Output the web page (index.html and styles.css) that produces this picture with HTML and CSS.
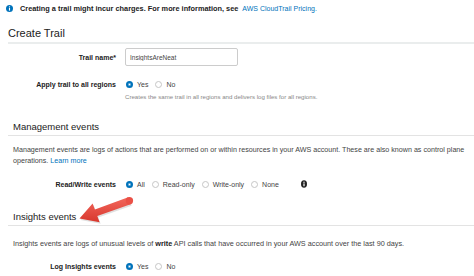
FILE: index.html
```html
<!DOCTYPE html>
<html lang="en">
<head>
  <meta charset="UTF-8">
  <title>Create Trail</title>
  <meta name="viewport" content="width=device-width, initial-scale=1">
  <link rel="stylesheet" href="styles.css">
</head>
<body>
  <div class="notice">
    <svg class="notice-icon" viewBox="0 0 10 10" width="7" height="7">
      <circle cx="5" cy="5" r="5" fill="#0073bb"/>
      <rect x="4.2" y="4.2" width="1.6" height="3.8" fill="#fff"/>
      <circle cx="5" cy="2.6" r="0.9" fill="#fff"/>
    </svg>
    <span class="notice-text">Creating a trail might incur charges. For more information, see</span>
    <a href="#" class="link">AWS CloudTrail Pricing.</a>
  </div>

  <h1 class="page-title">Create Trail</h1>

  <div class="form">
    <div class="row row-input">
      <label class="row-label">Trail name*</label>
      <input type="text" class="text-field" value="InsightsAreNeat">
    </div>
    <div class="row">
      <span class="row-label">Apply trail to all regions</span>
      <div class="radios">
        <span class="radio checked"></span><span class="opt">Yes</span>
        <span class="radio"></span><span class="opt">No</span>
      </div>
    </div>
    <div class="help">Creates the same trail in all regions and delivers log files for all regions.</div>
  </div>

  <section class="panel">
    <h2 class="panel-title">Management events</h2>
    <p class="panel-desc">Management events are logs of actions that are performed on or within resources in your AWS account. These are also known as control plane operations. <a href="#" class="link">Learn more</a></p>
    <div class="row">
      <span class="row-label">Read/Write events</span>
      <div class="radios">
        <span class="radio checked"></span><span class="opt">All</span>
        <span class="radio"></span><span class="opt">Read-only</span>
        <span class="radio"></span><span class="opt">Write-only</span>
        <span class="radio"></span><span class="opt">None</span>
        <svg class="info-dark" viewBox="0 0 8 10" width="6" height="8">
          <ellipse cx="4" cy="5" rx="4" ry="5" fill="#222"/>
          <rect x="3.2" y="4.2" width="1.6" height="3.8" fill="#fff"/>
          <circle cx="4" cy="2.6" r="0.9" fill="#fff"/>
        </svg>
      </div>
    </div>
  </section>

  <section class="panel panel-insights">
    <h2 class="panel-title">Insights events</h2>
    <p class="panel-desc">Insights events are logs of unusual levels of <b>write</b> API calls that have occurred in your AWS account over the last 90 days.</p>
    <div class="row">
      <span class="row-label">Log Insights events</span>
      <div class="radios">
        <span class="radio checked"></span><span class="opt">Yes</span>
        <span class="radio"></span><span class="opt">No</span>
      </div>
    </div>
  </section>

  <!-- callout arrow drawn over the page -->
  <svg class="callout" viewBox="0 0 474 276" width="474" height="276">
    <defs>
      <linearGradient id="arrowFill" x1="0" y1="0" x2="0" y2="1">
        <stop offset="0" stop-color="#f2675c"/>
        <stop offset="1" stop-color="#d8372d"/>
      </linearGradient>
    </defs>
    <polygon points="128.2,197.2 94.9,209.4 92.6,203.4 79.5,218.5 99.6,222.2 97.3,216.0 130.6,204.2" fill="#000" opacity="0.12" transform="translate(1,1.5)"/>
    <polygon points="128.2,197.2 94.9,209.4 92.6,203.4 79.5,218.5 99.6,222.2 97.3,216.0 130.6,204.2" fill="url(#arrowFill)"/>
    <circle cx="129.4" cy="200.7" r="3.7" fill="#ea5046"/>
  </svg>
</body>
</html>
```

FILE: styles.css
```css
body {
  margin: 0;
  padding: 0 0 0 8px;
  width: 466px;
  height: 276px;
  overflow: hidden;
  background: #fff;
  font-family: "Liberation Sans", Arial, sans-serif;
  color: #333;
  position: relative;
}
.link { color: #0073bb; text-decoration: none; font-weight: normal; }

.notice {
  height: 16px;
  display: flex; align-items: center; gap: 4px;
  font-size: 7px;
  margin-left: -2px;
}
.notice-icon { flex: none; margin-right: 3px; }
.notice-text { font-weight: bold; color: #222; font-size: 7.35px; }

.page-title {
  margin: 0;
  padding: 8px 0 0 0;
  line-height: 18px;
  font-size: 11px;
  font-weight: normal;
  color: #222;
  border-bottom: 2px solid #eaeded;
}

.row {
  display: flex; align-items: center;
  height: 16px;
}
.row-label {
  width: 108px; flex: none;
  text-align: right;
  font-size: 7px; font-weight: bold; color: #222;
  margin-right: 9px;
}
.row-wide .row-label { width: 102px; margin-right: 15px; }
.row-input { margin-top: 4px; height: 18px; }
.row-input + .row { margin-top: 10px; }
.text-field {
  box-sizing: border-box;
  width: 113px; height: 18px;
  border: 1px solid #ccc; border-radius: 2px;
  padding: 0 4px;
  font: 6.5px "Liberation Sans", Arial, sans-serif;
  color: #444;
  outline: none;
}
.radios { display: flex; align-items: center; font-size: 7px; color: #444; }
.radio {
  box-sizing: border-box;
  width: 7px; height: 7px;
  border-radius: 50%;
  border: 1px solid #c6c6c6;
  background: #fff;
  margin-right: 4px;
  margin-left: 1px;
}
.radio.checked { border: 2px solid #0073bb; background: #fff; box-shadow: inset 0 0 0 0.5px #0073bb; }
.opt { margin-right: 6px; }
.info-dark { margin-left: 16px; }
.help {
  padding-left: 117px;
  font-size: 6.1px; color: #888;
  line-height: 9px;
}

.panel-title {
  margin: 0;
  padding: 20px 0 2px 5px;
  line-height: 12px;
  font-size: 9.5px; font-weight: normal; color: #222;
  border-bottom: 1px solid #e3e3e3;
}
.panel-desc {
  margin: 9px 0 0 0;
  padding-left: 5px;
  font-size: 7.15px; line-height: 11px; color: #444;
}
.panel-desc b { color: #222; }
.panel .row { margin-top: 9px; }
.panel-insights .panel-title { padding-top: 19px; }
.panel-insights .panel-desc { margin-top: 12px; font-size: 7.25px; }

.callout {
  position: absolute; left: 0; top: 0;
  pointer-events: none;
}
```
